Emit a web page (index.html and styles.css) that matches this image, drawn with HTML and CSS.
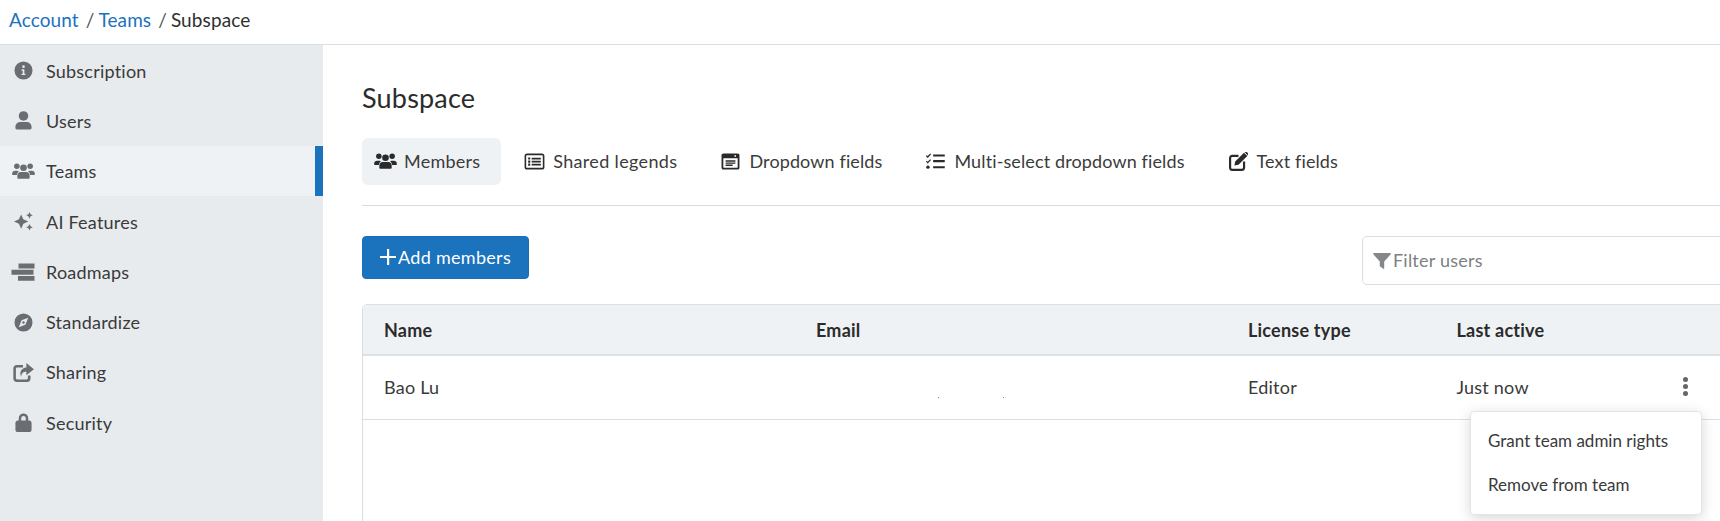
FILE: index.html
```html
<!DOCTYPE html>
<html lang="en">
<head>
<meta charset="utf-8">
<title>Subspace</title>
<link rel="stylesheet" href="styles.css">
</head>
<body>
<svg class="defs" aria-hidden="true">
  <symbol id="i-info" viewBox="0 0 20 20"><path fill-rule="evenodd" d="M10 .5a9.5 9.5 0 1 1 0 19 9.5 9.5 0 0 1 0-19zM10 4.6a1.4 1.4 0 1 0 0 2.8 1.4 1.4 0 0 0 0-2.8zM8 8.8v1.5h1.2v3H8v1.5h4v-1.5h-1.1V8.800z"/></symbol>
  <symbol id="i-user" viewBox="0 0 20 20"><circle cx="10" cy="5.200" r="5"/><path d="M6.500 11.500h7c3 0 5 2.300 5 5.200v1.300c0 .9-.6 1.500-1.500 1.500H3c-.9 0-1.500-.6-1.500-1.500v-1.300c0-2.900 2-5.200 5-5.200z"/></symbol>
  <symbol id="i-users" viewBox="0 0 24 20"><circle cx="5" cy="4.500" r="2.900"/><circle cx="19" cy="4.500" r="2.900"/><circle cx="12" cy="6" r="3.500"/><path d="M0 12.500c0-2 1.500-3.300 3.200-3.300h2.300c.7 0 1.200.2 1.700.5-1.300 1-2.100 2.400-2.200 4H1c-.6 0-1-.4-1-1.200zM24 12.500c0-2-1.500-3.300-3.200-3.300h-2.300c-.7 0-1.200.2-1.700.5 1.300 1 2.100 2.400 2.200 4H23c.6 0 1-.4 1-1.200zM9 10.500h6c2 0 3.500 1.600 3.500 3.600v2.400c0 .6-.4 1-1 1h-11c-.6 0-1-.4-1-1v-2.400c0-2 1.500-3.600 3.500-3.600z"/></symbol>
  <symbol id="i-spark" viewBox="0 0 20 20"><path d="M7.500 2.500l2.300 5.200 5.200 2.300-5.200 2.300-2.300 5.200-2.300-5.200L0 10l5.200-2.300zM16.300 0l1.100 2.400 2.400 1.100-2.400 1.100-1.100 2.400-1.100-2.400-2.400-1.100 2.400-1.100zM16.300 12.600l1.100 2.400 2.400 1.100-2.400 1.100-1.100 2.400-1.100-2.400-2.400-1.100 2.400-1.100z"/></symbol>
  <symbol id="i-road" viewBox="0 0 24 18"><path d="M7.500 0.500h16v5h-16zM0.500 6.800h22v5h-22zM7 13h16.500v4.800H7z"/></symbol>
  <symbol id="i-compass" viewBox="0 0 20 20"><path fill-rule="evenodd" d="M10 .5a9.500 9.500 0 1 1 0 19 9.500 9.500 0 0 1 0-19zM15 5l-7 2.600L5 15l7-2.700zM10 8.700a1.300 1.300 0 1 1 0 2.600 1.300 1.300 0 0 1 0-2.600z"/></symbol>
  <symbol id="i-share" viewBox="0 0 22 20"><path d="M4 2h6.500v2.800H4.400c-.9 0-1.400.5-1.400 1.300v9.800c0 .9.500 1.400 1.400 1.400h9.900c.8 0 1.300-.5 1.300-1.400v-2.800h2.800v3.100c0 2.300-1.600 3.800-3.800 3.800H4C1.800 20 .3 18.500.3 16.300V5.700C.3 3.500 1.800 2 4 2z"/><path d="M14 0l8 6.500-8 6.500V9.300c-3.200 0-5 1.200-5.500 5.200-2.200-5 .3-9.200 5.500-9.800z"/></symbol>
  <symbol id="i-lock" viewBox="0 0 20 20"><path fill-rule="evenodd" d="M5 8V5.500a5 5 0 0 1 10 0V8h1c1.400 0 2.500 1 2.500 2.500v7c0 1.400-1.100 2.500-2.500 2.500H4c-1.400 0-2.500-1.100-2.500-2.500v-7C1.500 9 2.600 8 4 8zM7.600 8h4.800V5.500a2.400 2.400 0 0 0-4.800 0z"/></symbol>
  <symbol id="i-list" viewBox="0 0 22 18"><path fill-rule="evenodd" d="M3 .5h16c1.500 0 2.500 1 2.500 2.500v12c0 1.500-1 2.500-2.500 2.500H3C1.500 17.500.5 16.500.5 15V3C.5 1.500 1.500.5 3 .5zM3 2.300c-.5 0-.8.300-.8.700v12c0 .4.300.7.800.700h16c.5 0 .8-.3.8-.7V3c0-.4-.3-.7-.8-.7z"/><path d="M4.300 4.800h2.200V7H4.300zM8 5h9.700v1.800H8zM4.300 8h2.200v2.200H4.300zM8 8.200h9.700V10H8zM4.300 11.200h2.200v2.200H4.300zM8 11.400h9.700v1.800H8z"/></symbol>
  <symbol id="i-drop" viewBox="0 0 20 18"><path fill-rule="evenodd" d="M2.500.5h15c1.200 0 2 .8 2 2v13c0 1.200-.8 2-2 2h-15c-1.200 0-2-.8-2-2v-13c0-1.200.8-2 2-2zM2.400 5.500v9.700c0 .3.200.5.500.5h14.200c.3 0 .5-.2.500-.5V5.500zM15 2.200a.9.900 0 1 0 0 1.800.9.900 0 0 0 0-1.800z"/><path d="M4.800 7.700h10.400v1.500H4.800zM4.800 10h10.400v1.500H4.800zM4.800 12.300h7.500v1.500H4.800z"/></symbol>
  <symbol id="i-multi" viewBox="0 0 20 18"><path d="M.7 2.300l1 1L4.300.5l1 .9-3.500 3.800L-.2 3.200zM.7 8.300l1 1 2.600-2.800 1 .9-3.500 3.800-2-2zM7.500 1.500h12.300v2.200H7.500zM7.500 7.500h12.300v2.200H7.500zM7.500 13.900h12.300v2.200H7.500z"/><circle cx="2" cy="15" r="1.800"/></symbol>
  <symbol id="i-edit" viewBox="0 0 20 20"><path d="M3.500 3H10v2.200H3.700c-.9 0-1.400.5-1.400 1.300v9.800c0 .8.500 1.400 1.400 1.400h9.600c.8 0 1.400-.6 1.400-1.400V10H17v6.500c0 2-1.500 3.500-3.500 3.500h-10C1.500 20 0 18.500 0 16.500v-10C0 4.500 1.500 3 3.500 3z"/><path d="M15.800.7l3.500 3.500-9.300 9.300-4.300.8.800-4.300zM16.600-.1c.6-.6 1.400-.6 2 0l1.500 1.500c.6.600.6 1.400 0 2l-.2.200-3.500-3.500z"/></symbol>
  <symbol id="i-filter" viewBox="0 0 20 18"><path d="M.8 0h18.400c.7 0 1 .8.600 1.300L12.500 9.500v7.700c0 .6-.6.900-1.100.6l-3.400-2.500c-.3-.2-.5-.5-.5-.8V9.500L.2 1.300C-.2.800.1 0 .8 0z"/></symbol>
  <symbol id="i-plus" viewBox="0 0 16 16"><path d="M7 0h2.200v6.900H16v2.200H9.200V16H7V9.100H0V6.900h7z"/></symbol>
</svg>

<header class="crumbs">
  <a class="crumb-link" href="#">Account</a>
  <span class="crumb-sep">/</span>
  <a class="crumb-link" href="#">Teams</a>
  <span class="crumb-sep">/</span>
  <span class="crumb-current">Subspace</span>
</header>

<div class="shell">
  <nav class="side">
    <a class="side-item" href="#"><span class="side-ico"><svg class="ico-19"><use href="#i-info"/></svg></span>Subscription</a>
    <a class="side-item" href="#"><span class="side-ico"><svg class="ico-19"><use href="#i-user"/></svg></span>Users</a>
    <a class="side-item active" href="#"><span class="side-ico"><svg class="ico-team"><use href="#i-users"/></svg></span>Teams</a>
    <a class="side-item" href="#"><span class="side-ico"><svg class="ico-19"><use href="#i-spark"/></svg></span>AI Features</a>
    <a class="side-item" href="#"><span class="side-ico"><svg class="ico-road"><use href="#i-road"/></svg></span>Roadmaps</a>
    <a class="side-item" href="#"><span class="side-ico"><svg class="ico-19"><use href="#i-compass"/></svg></span>Standardize</a>
    <a class="side-item" href="#"><span class="side-ico"><svg class="ico-share"><use href="#i-share"/></svg></span>Sharing</a>
    <a class="side-item" href="#"><span class="side-ico"><svg class="ico-19"><use href="#i-lock"/></svg></span>Security</a>
  </nav>

  <main class="main">
    <h1 class="title">Subspace</h1>
    <div class="tabs">
      <a class="tab active" href="#"><svg class="tab-team"><use href="#i-users"/></svg>Members</a>
      <a class="tab wide" href="#"><svg class="tab-ico"><use href="#i-list"/></svg>Shared legends</a>
      <a class="tab tight" href="#"><svg class="tab-ico-s"><use href="#i-drop"/></svg>Dropdown fields</a>
      <a class="tab tight" href="#"><svg class="tab-ico-s"><use href="#i-multi"/></svg>Multi-select dropdown fields</a>
      <a class="tab tight" href="#"><svg class="tab-ico-e"><use href="#i-edit"/></svg>Text fields</a>
    </div>

    <div class="toolbar">
      <button class="add-btn" type="button"><svg class="plus"><use href="#i-plus"/></svg>Add members</button>
      <label class="filter"><svg class="filter-ico"><use href="#i-filter"/></svg><span>Filter users</span></label>
    </div>

    <div class="table">
      <div class="row head">
        <div>Name</div><div>Email</div><div>License type</div><div>Last active</div>
      </div>
      <div class="row body">
        <div>Bao Lu</div>
        <div class="email"><i class="speck first"></i><i class="speck"></i></div>
        <div>Editor</div>
        <div>Just now</div>
        <div class="kebab"><b></b><b></b><b></b></div>
      </div>
      <div class="menu">
        <div class="menu-item">Grant team admin rights</div>
        <div class="menu-item">Remove from team</div>
      </div>
    </div>
  </main>
</div>
</body>
</html>
```
FILE: styles.css
```css
* { box-sizing: border-box; }
html, body { margin: 0; height: 100%; overflow: hidden; }
body {
  width: 1720px;
  height: 521px;
  background: #fff;
  color: #2f2f2f;
  font-family: Lato, "Noto Sans", sans-serif;
  font-size: 18px;
  letter-spacing: 0.22px;
}
a { color: inherit; text-decoration: none; }
.defs { position: absolute; width: 0; height: 0; }
svg { fill: currentColor; display: block; overflow: visible; }

.crumbs {
  height: 45px;
  border-bottom: 1px solid #dcdfe1;
  padding: 0 9px 5px;
  display: flex;
  align-items: center;
  font-size: 19px;
  letter-spacing: 0.1px;
}
.crumb-link { color: #1b72bd; }
.crumb-sep { color: #555; margin: 0 4px 0 7px; }
.crumb-current { color: #2f2f2f; }

.shell { display: flex; height: 476px; }
.side { width: 323px; flex: none; background: #e8ebee; padding-top: 0.5px; }
.side-item {
  height: 50.300px;
  display: flex;
  align-items: center;
  color: #3a3a3a;
}
.side-item.active { background: #eff2f5; border-right: 8px solid #1b72bd; }
.side-ico {
  width: 46px;
  display: flex;
  justify-content: center;
  color: #6a6d71;
  flex: none;
}
.ico-19 { width: 19px; height: 19px; }
.ico-team { width: 23px; height: 19px; }
.ico-road { width: 24px; height: 18px; }
.ico-share { width: 21px; height: 19px; }

.main { flex: 1; min-width: 0; padding: 0 0 0 39px; overflow: hidden; }
.title { margin: 35px 0 0; font-size: 27px; line-height: 36px; font-weight: 400; color: #2b2b2b; letter-spacing: 0.2px; }
.tabs {
  width: 1400px;
  margin-top: 22px;
  padding-bottom: 20px;
  border-bottom: 1px solid #d9dcde;
  display: flex;
  gap: 11px;
}
.tab {
  height: 47px;
  padding: 0 21px 1px 12px;
  border-radius: 6px;
  display: flex;
  align-items: center;
  gap: 8px;
  color: #3b3b3b;
}
.tab.active { background: #eff2f5; gap: 7px; }
.tab.wide { letter-spacing: 0.35px; }
.tab.tight { letter-spacing: 0.12px; gap: 9px; }
.tab svg { color: #2a2a2a; flex: none; }
.tab-team { width: 23px; height: 19px; }
.tab-ico { width: 21px; height: 17px; }
.tab-ico-s { width: 19px; height: 17px; }
.tab-ico-e { width: 19px; height: 19px; }

.toolbar {
  width: 1400px;
  margin-top: 30px;
  display: flex;
  justify-content: space-between;
  align-items: flex-start;
}
.add-btn {
  width: 167px;
  height: 43px;
  border: 1px solid #1a6fb8;
  border-radius: 4px;
  background: #1b72bd;
  color: #fff;
  font: inherit;
  letter-spacing: 0.3px;
  display: flex;
  align-items: center;
  justify-content: center;
  gap: 2px;
  padding: 0 0 2px;
}
.plus { width: 16px; height: 16px; }
.filter {
  width: 400px;
  height: 49px;
  border: 1px solid #d9dee2;
  border-radius: 5px;
  display: flex;
  align-items: center;
  padding: 0 0 2px 10px;
  gap: 2px;
  color: #7d8083;
}
.filter-ico { width: 18px; height: 16px; color: #85888b; margin-top: 2px; }

.table {
  position: relative;
  width: 1400px;
  height: 300px;
  margin-top: 19px;
  border: 1px solid #dcdfe2;
  border-radius: 5px 5px 0 0;
}
.row {
  display: grid;
  grid-template-columns: 432px 432px 208.500px 1fr;
  padding-left: 21px;
  align-items: center;
}
.head {
  height: 51px;
  background: #eff2f5;
  border-bottom: 2px solid #dde1e4;
  font-weight: 700;
  color: #2b2b2b;
  border-radius: 4px 4px 0 0;
}
.body {
  height: 64px;
  padding-bottom: 2px;
  border-bottom: 1px solid #dcdfe2;
  color: #3a3a3a;
  grid-template-columns: 432px 432px 208.500px 226px 1fr;
}
.email { position: relative; height: 100%; }
.speck { position: absolute; top: 41px; left: 122px; width: 1px; height: 1px; background: #888; }
.speck.first { left: 187px; }
.kebab { display: flex; flex-direction: column; align-items: flex-start; gap: 2px; }
.kebab b { width: 5px; height: 5px; border-radius: 50%; background: #63666a; }

.menu {
  position: absolute;
  left: 1107px;
  top: 106px;
  width: 232px;
  height: 104px;
  padding-top: 6px;
  background: #fff;
  border: 1px solid #e2e4e6;
  border-radius: 4px;
  box-shadow: 0 3px 14px rgba(0, 0, 0, 0.16);
  color: #3a3a3a;
  font-size: 17px;
  letter-spacing: 0;
}
.menu-item { height: 44.500px; padding-left: 17px; display: flex; align-items: center; }
```
